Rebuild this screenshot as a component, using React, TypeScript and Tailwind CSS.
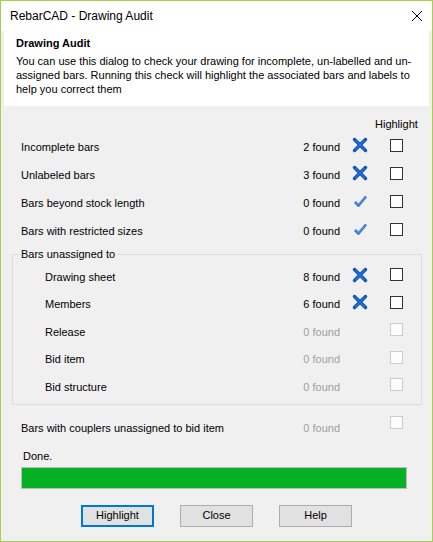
import React from 'react';

type Row = {
  label: string;
  count: string;
  status?: 'fail' | 'ok';
  enabled: boolean;
};

const topRows: Row[] = [
  { label: 'Incomplete bars', count: '2 found', status: 'fail', enabled: true },
  { label: 'Unlabeled bars', count: '3 found', status: 'fail', enabled: true },
  { label: 'Bars beyond stock length', count: '0 found', status: 'ok', enabled: true },
  { label: 'Bars with restricted sizes', count: '0 found', status: 'ok', enabled: true },
];

const groupRows: Row[] = [
  { label: 'Drawing sheet', count: '8 found', status: 'fail', enabled: true },
  { label: 'Members', count: '6 found', status: 'fail', enabled: true },
  { label: 'Release', count: '0 found', enabled: false },
  { label: 'Bid item', count: '0 found', enabled: false },
  { label: 'Bid structure', count: '0 found', enabled: false },
];

const FailIcon = () => (
  <svg width="16" height="16" viewBox="0 0 16 16">
    <path d="M2.5 2.5 L13.5 13.5 M13.5 2.5 L2.5 13.5" stroke="#0a4fb8" strokeWidth="3.4" strokeLinecap="round" />
    <path d="M3 3 L13 13 M13 3 L3 13" stroke="#2f72d6" strokeWidth="1.2" strokeLinecap="round" />
  </svg>
);

const OkIcon = () => (
  <svg width="16" height="16" viewBox="0 0 16 16">
    <path d="M3 9 L6.5 12.5 L14 3.5" fill="none" stroke="#2a6fd0" strokeWidth="2.6" strokeLinejoin="round" />
    <path d="M3.5 9 L6.5 12 L13.5 4" fill="none" stroke="#6aa8ef" strokeWidth="0.9" />
  </svg>
);

const Checkbox = ({ enabled }: { enabled: boolean }) => (
  <div
    className={
      enabled
        ? 'w-[13px] h-[13px] border border-[#333333] bg-white'
        : 'w-[13px] h-[13px] border border-[#cccccc] bg-[#fcfcfc]'
    }
  />
);

const CheckRow = ({ row, inset }: { row: Row; inset?: boolean }) => (
  <div className={inset ? 'flex items-center h-[27.5px] pl-[32px] pr-[18px]' : 'flex items-center h-[28px] pl-[20px] pr-[29px]'}>
    <span className="flex-1 mt-[4px] whitespace-nowrap">{row.label}</span>
    <span className={row.enabled ? 'w-[80px] mt-[4px] text-right' : 'w-[80px] mt-[4px] text-right text-[#a0a0a0]'}>
      {row.count}
    </span>
    <div className="ml-[12px] w-[16px] h-[16px] flex items-center justify-center">
      {row.status === 'fail' && <FailIcon />}
      {row.status === 'ok' && <OkIcon />}
    </div>
    <div className="ml-[22px]">
      <Checkbox enabled={row.enabled} />
    </div>
  </div>
);

export default function App() {
  return (
    <div
      className="w-[433px] h-[542px] border border-[#a4d04d] flex flex-col text-[11px] leading-[14px] text-[#000000]"
      style={{ fontFamily: '"Liberation Sans", Arial, sans-serif' }}
    >
      <div className="h-[30px] bg-white flex items-center pl-[9px] pr-[9px] text-[12px]">
        <span className="flex-1">RebarCAD - Drawing Audit</span>
        <svg width="12" height="12" viewBox="0 0 12 12">
          <path d="M1 1 L11 11 M11 1 L1 11" stroke="#000" strokeWidth="1" />
        </svg>
      </div>

      <div className="flex-1 bg-[#f0f0f0] flex flex-col">
        <div className="mx-[3px] h-[75px] bg-white pl-[12px] pt-[5px]">
          <div className="font-bold">Drawing Audit</div>
          <div className="mt-[4px] whitespace-nowrap">
            You can use this dialog to check your drawing for incomplete, un-labelled and un-
            <br />
            assigned bars. Running this check will highlight the associated bars and labels to
            <br />
            help you correct them
          </div>
        </div>

        <div className="mt-[11px] pl-[374px]">Highlight</div>

        <div className="flex flex-col">
          {topRows.map((r) => (
            <CheckRow key={r.label} row={r} />
          ))}
        </div>

        <fieldset className="mt-[4px] ml-[11px] mr-[10px] border border-[#dcdcdc] pb-[5px]">
          <legend className="ml-[6px] px-[2px]">Bars unassigned to</legend>
          {groupRows.map((r) => (
            <CheckRow key={r.label} row={r} inset />
          ))}
        </fieldset>

        <div className="mt-[4px] flex items-center h-[28px] pl-[20px] pr-[29px]">
          <span className="flex-1 mt-[10px]">Bars with couplers unassigned to bid item</span>
          <span className="w-[80px] mt-[10px] text-right text-[#a0a0a0]">0 found</span>
          <div className="ml-[50px]">
            <Checkbox enabled={false} />
          </div>
        </div>

        <div className="mt-[12px] pl-[22px]">Done.</div>
        <div className="mt-[4px] ml-[20px] w-[386px] h-[22px] border border-[#bcbcbc] bg-[#e6e6e6]">
          <div className="h-full w-full bg-[#06b025]" />
        </div>

        <div className="mt-[16px] flex justify-center gap-[26px]">
          <button className="w-[73px] h-[22px] border-2 border-[#0078d7] bg-[#e1e1e1] leading-none">Highlight</button>
          <button className="w-[73px] h-[22px] border border-[#adadad] bg-[#e1e1e1] leading-none">Close</button>
          <button className="w-[73px] h-[22px] border border-[#adadad] bg-[#e1e1e1] leading-none">Help</button>
        </div>
      </div>
    </div>
  );
}
